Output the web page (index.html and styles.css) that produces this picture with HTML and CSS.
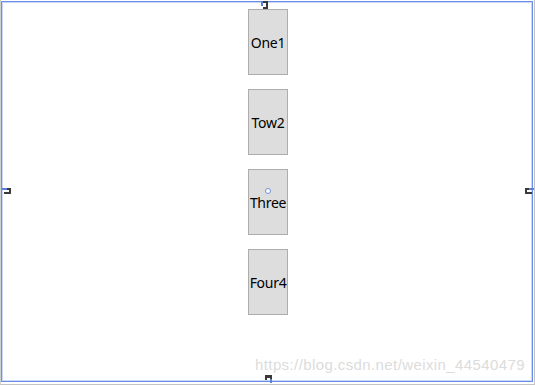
FILE: index.html
```html
<!DOCTYPE html>
<html>
<head>
<meta charset="utf-8">
<link rel="stylesheet" href="styles.css">
</head>
<body>
<div class="window">
  <div class="stack">
    <div class="btn">One1</div>
    <div class="btn">Tow2</div>
    <div class="btn">Three</div>
    <div class="btn">Four4</div>
  </div>
  <div class="watermark">https://blog.csdn.net/weixin_44540479</div>

  <div class="selection">
    <span class="dot"></span>
    <svg class="handle h-top" width="9" height="10" viewBox="0 0 9 10"><path d="M1 1 H8 V9 H3 V7 H6 V3 H3 V6 H1 Z" fill="#3a3a3a"/><path d="M1 1 H3 V6 H1Z" fill="#5b80d8"/></svg>
    <svg class="handle h-left" width="11" height="8" viewBox="0 0 11 8"><path d="M1 1 H10 V7 H3 V5 H8 V3 H1 Z" fill="#3a3a3a"/><path d="M1 1 H6 V3 H1Z" fill="#5b80d8"/></svg>
    <svg class="handle h-right" width="11" height="8" viewBox="0 0 11 8"><path d="M10 1 H1 V7 H8 V5 H3 V3 H10 Z" fill="#3a3a3a"/><path d="M10 1 H5 V3 H10Z" fill="#5b80d8"/></svg>
    <svg class="handle h-bottom" width="9" height="10" viewBox="0 0 9 10"><path d="M1 1 H8 V9 H6 V4 H3 V6 H1 Z" fill="#3a3a3a"/><path d="M6 5 H8 V9 H6Z" fill="#5b80d8"/></svg>
  </div>
</div>
</body>
</html>
```
FILE: styles.css
```css
html, body {
  margin: 0;
  padding: 0;
  background: #ffffff;
}
.window {
  position: relative;
  width: 535px;
  height: 385px;
  box-sizing: border-box;
  border-left: 1px solid #d0d0d0;
  border-right: 1px solid #c4c4c4;
  border-bottom: 1px solid #c4c4c4;
  overflow: hidden;
  font-family: "Noto Sans", "Liberation Sans", sans-serif;
}
.stack {
  display: flex;
  flex-direction: column;
  align-items: flex-start;
  gap: 14px;
  padding-top: 9px;
  padding-left: 247px;
}
.btn {
  width: 40px;
  height: 66px;
  box-sizing: border-box;
  background: #dddddd;
  border: 1px solid #adadad;
  display: flex;
  align-items: center;
  justify-content: center;
  font-size: 14px;
  color: #000;
  white-space: nowrap;
  letter-spacing: -0.3px;
}
.watermark {
  position: absolute;
  left: 254px;
  top: 356px;
  font-family: "Liberation Sans", Arial, sans-serif;
  font-size: 15px;
  color: #dcdcdc;
  letter-spacing: 0.4px;
  white-space: nowrap;
}
.selection {
  position: absolute;
  left: 0px;
  top: 1px;
  width: 532px;
  height: 381px;
  box-sizing: border-box;
  border: 1px solid #6b8fe8;
  box-shadow: inset 0 0 0 1px #c9d7f7;
}
.dot {
  position: absolute;
  left: 263px;
  top: 186px;
  width: 4px;
  height: 4px;
  border: 1px solid #6f90e2;
  border-radius: 50%;
  background: #fff;
}
.handle {
  position: absolute;
  display: block;
}
.h-top { left: 258px; top: -2px; }
.h-left { left: -1px; top: 185px; }
.h-right { left: 522px; top: 185px; }
.h-bottom { left: 262px; top: 372px; }
```
